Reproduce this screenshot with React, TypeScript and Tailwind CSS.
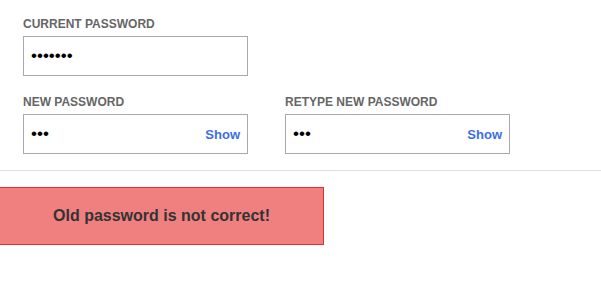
import { useState } from "react";

interface FieldProps {
  label: string;
  value: string;
  toggle?: boolean;
}

const Field = ({ label, value, toggle }: FieldProps) => {
  const [shown, setShown] = useState(false);
  return (
    <div className="flex flex-col w-[225px]">
      <label className="text-[12px] leading-[14px] font-bold uppercase text-[#666666]">
        {label}
      </label>
      <div className="mt-[5px] relative h-[40px] border border-[#aaaaaa] bg-white flex items-center">
        <input
          type={shown ? "text" : "password"}
          defaultValue={value}
          className="flex-1 min-w-0 h-full pl-[7px] pr-2 text-[17px] text-black outline-none bg-transparent"
        />
        {toggle && (
          <button
            onClick={() => setShown((s) => !s)}
            className="pr-[7px] pt-[1px] text-[13px] font-bold text-[#3a6ee8] cursor-pointer"
          >
            {shown ? "Hide" : "Show"}
          </button>
        )}
      </div>
    </div>
  );
};

export default function App() {
  return (
    <div
      className="w-[601px] h-[300px] bg-white overflow-hidden"
      style={{ fontFamily: '"Liberation Sans", Arial, sans-serif' }}
    >
      <div className="pt-[17px] px-[23px]">
        <Field label="Current password" value="1234567" />
        <div className="mt-[19px] flex gap-[37px]">
          <Field label="New password" value="abc" toggle />
          <Field label="Retype new password" value="abc" toggle />
        </div>
      </div>
      <div className="mt-[16px] border-t border-[#dddddd]" />
      <div className="mt-[16px] ml-[-1px] w-[325px] h-[58px] bg-[#f08080] border border-[#e02c2c] flex items-center justify-center">
        <p className="text-[16px] font-bold text-[#333333]">Old password is not correct!</p>
      </div>
    </div>
  );
}
